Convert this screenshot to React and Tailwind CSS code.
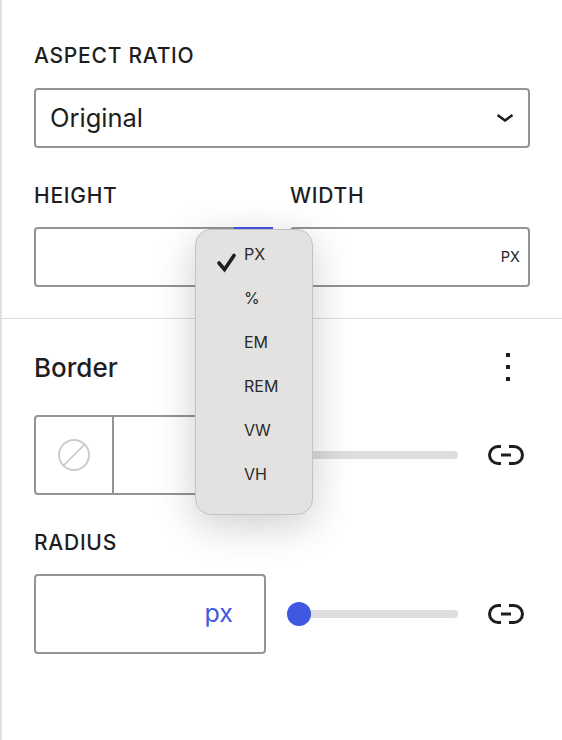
const units = ["PX", "%", "EM", "REM", "VW", "VH"]

function Label({ children, className = "" }) {
  return <div className={`text-[21px] leading-[28px] font-medium tracking-[0.75px] text-[#1e1e1e] uppercase ${className}`}>{children}</div>
}

function LinkIcon() {
  return (
    <svg width="36" height="20" viewBox="0 0 36 20" fill="none" stroke="#1e1e1e" strokeWidth="3">
      <path d="M13 1.500H10C5.500 1.500 1.500 5.500 1.500 10C1.500 14.500 5.500 18.500 10 18.500H13" />
      <path d="M21 1.500H26C30.500 1.500 34.500 5.500 34.500 10C34.500 14.500 30.500 18.500 26 18.500H21" />
      <path d="M13 10H23" />
    </svg>
  )
}

function Slider({ showThumb }) {
  return (
    <div className="relative flex-1 h-2 rounded-full bg-[#dddddd]">
      {showThumb && <div className="absolute left-[-12px] top-[-8px] w-6 h-6 rounded-full bg-[#3f57e1]"></div>}
    </div>
  )
}

function UnitMenu() {
  return (
    <div className="absolute left-[195px] top-[229px] w-[118px] h-[286px] pt-[2px] rounded-2xl border border-[#c4c3c1] bg-[#e3e2e0] shadow-[0_10px_40px_rgba(0,0,0,0.2)]">
      {units.map((u, i) => (
        <div key={u} className="relative h-11 pl-12 flex items-center text-[16px] text-[#2a2a2a]">
          {i === 0 && (
            <svg className="absolute left-[20px] top-[21px]" width="20" height="20" viewBox="0 0 20 20" fill="none" stroke="#1e1e1e" strokeWidth="3.600" strokeLinecap="round">
              <path d="M3 10L8.500 16.500L18 2.500" />
            </svg>
          )}
          {u}
        </div>
      ))}
    </div>
  )
}

export default function App() {
  return (
    <div className="relative w-[562px] h-[740px] overflow-hidden bg-white border-l-2 border-[#e0e0e0] font-['Inter',sans-serif]">
      <div className="px-8 pt-[42px] pb-[31px] border-b border-[#dcdcdc]">
        <Label className="mb-[18px]">Aspect ratio</Label>
        <div className="h-[60px] w-[496px] flex items-center justify-between pl-[14px] pr-[15px] rounded border-2 border-[#949494] text-[25.500px] text-[#1e1e1e]">
          <span>Original</span>
          <svg width="16" height="8" viewBox="0 0 16 8" fill="none" stroke="#1e1e1e" strokeWidth="2.500">
            <path d="M0.500 1L8 6.500L15.500 1" />
          </svg>
        </div>
        <div className="flex gap-[16px] mt-[34px]">
          <div className="w-[240px]">
            <Label className="mb-[17px]">Height</Label>
            <div className="relative h-[60px] rounded border-2 border-[#949494]">
              <div className="absolute right-[-1px] top-[-2px] w-[39px] h-[3px] bg-[#3f57e1]"></div>
            </div>
          </div>
          <div className="w-[240px]">
            <Label className="mb-[17px]">Width</Label>
            <div className="h-[60px] flex items-center justify-end pr-[8px] rounded border-2 border-[#949494] text-[14.500px] text-[#1e1e1e]">PX</div>
          </div>
        </div>
      </div>

      <div className="px-8 pt-[34px]">
        <div className="flex items-center justify-between h-[28px] mb-[34px]">
          <span className="text-[26px] font-medium text-[#1e1e1e]">Border</span>
          <div className="flex flex-col gap-[8px] mr-[20px]">
            <div className="w-1 h-1 bg-[#1e1e1e]"></div>
            <div className="w-1 h-1 bg-[#1e1e1e]"></div>
            <div className="w-1 h-1 bg-[#1e1e1e]"></div>
          </div>
        </div>

        <div className="flex items-center">
          <div className="w-[232px] h-[80px] flex rounded border-2 border-[#949494]">
            <div className="w-[78px] flex items-center justify-center border-r-2 border-[#949494]">
              <svg width="32" height="32" viewBox="0 0 32 32" fill="none" stroke="#cccccc" strokeWidth="2">
                <circle cx="16" cy="16" r="15" />
                <path d="M5 27L27 5" stroke="#c2c2c2" strokeWidth="1.500" />
              </svg>
            </div>
          </div>
          <div className="flex-1 ml-[33px] mr-[30px]"><Slider /></div>
          <div className="mr-[6px] flex"><LinkIcon /></div>
        </div>

        <Label className="mt-[34px] mb-[17px]">Radius</Label>
        <div className="flex items-center">
          <div className="w-[232px] h-[80px] flex items-center justify-end pr-[31px] rounded border-2 border-[#949494] text-[25px] text-[#3f57e1]">px</div>
          <div className="flex-1 ml-[33px] mr-[30px]"><Slider showThumb /></div>
          <div className="mr-[6px] flex"><LinkIcon /></div>
        </div>
      </div>

      <div className="absolute left-[-2px] top-0">
        <UnitMenu />
      </div>
    </div>
  )
}
